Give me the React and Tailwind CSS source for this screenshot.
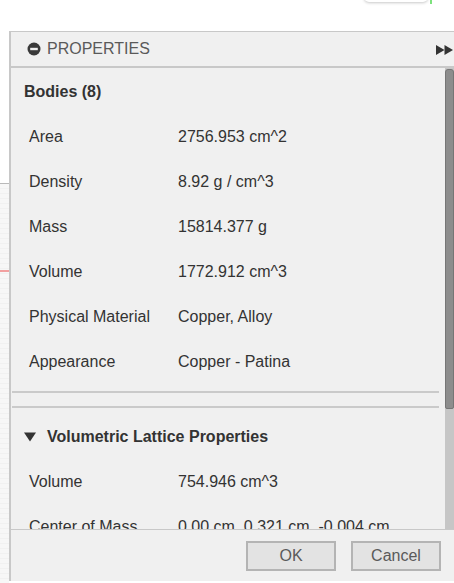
import React from "react";

const rows = [
  ["Area", "2756.953 cm^2"],
  ["Density", "8.92 g / cm^3"],
  ["Mass", "15814.377 g"],
  ["Volume", "1772.912 cm^3"],
  ["Physical Material", "Copper, Alloy"],
  ["Appearance", "Copper - Patina"],
];

function Row({ label, value }) {
  return (
    <div className="flex h-[45px] items-center shrink-0">
      <div className="w-[167px] shrink-0 pl-[18px] whitespace-nowrap">{label}</div>
      <div className="whitespace-nowrap">{value}</div>
    </div>
  );
}

export default function App() {
  return (
    <div
      className="relative w-[454px] h-[583px] bg-white overflow-hidden text-[16px] text-[#333]"
      style={{ fontFamily: '"Liberation Sans", Arial, sans-serif' }}
    >
      {/* top-right toolbar shadow remnant */}
      <div className="absolute left-[364px] top-[-6px] w-[64px] h-[8px] rounded-b-[5px] bg-white shadow-[0_1px_3px_rgba(0,0,0,0.22)]" />
      <div className="absolute left-[430px] top-0 w-[2px] h-[4px] bg-[#7de27d]" />
      {/* canvas strip at left */}
      <div className="absolute left-0 top-[183px] w-[9px] h-[400px] border-t border-[#b9b9b9] bg-[repeating-linear-gradient(180deg,#f7f7f7_0px,#f7f7f7_4px,#ebebeb_5px)]">
        <div className="mt-[86px] h-[2px] bg-[#f2a0a0]" />
      </div>

      <div className="ml-[9px] mt-[31px] w-[445px] h-[550px] flex flex-col bg-[#f0f0f0] border-l-2 border-[#c8c8c8]">
        {/* header */}
        <div className="h-[37px] shrink-0 flex items-center border-t border-b-2 border-[#c8c8c8] pl-[16px] pr-[1px]">
          <svg width="14" height="14" viewBox="0 0 14 14" className="shrink-0">
            <circle cx="7" cy="7" r="6.5" fill="#3a3a3a" />
            <rect x="3.2" y="5.8" width="7.6" height="2.4" fill="#f0f0f0" />
          </svg>
          <span className="ml-[6px] text-[#5a5a5a]">PROPERTIES</span>
          <svg width="17" height="10" viewBox="0 0 17 10" className="ml-auto mt-[2px]">
            <polygon points="0,0 8.5,5 0,10" fill="#333" />
            <polygon points="8.5,0 17,5 8.5,10" fill="#333" />
          </svg>
        </div>

        {/* body */}
        <div className="flex-1 flex min-h-0">
          <div className="flex-1 flex flex-col overflow-hidden pt-[1px]">
            <div className="flex h-[45px] items-center shrink-0 pl-[13px] font-bold">Bodies (8)</div>
            {rows.map(([l, v]) => (
              <Row key={l} label={l} value={v} />
            ))}
            <div className="shrink-0 mt-[7px] ml-[1px] mr-[6px] h-[2px] bg-[#cacaca]" />
            <div className="shrink-0 mt-[13px] ml-[1px] mr-[6px] h-[2px] bg-[#cacaca]" />
            <div className="flex h-[45px] items-center shrink-0 mt-[6px] pl-[13px] font-bold">
              <svg width="12" height="10" viewBox="0 0 12 10" className="mr-[11px]">
                <polygon points="0,0.5 12,0.5 6,9.5" fill="#333" />
              </svg>
              Volumetric Lattice Properties
            </div>
            <Row label="Volume" value="754.946 cm^3" />
            <Row label="Center of Mass" value="0.00 cm, 0.321 cm, -0.004 cm" />
          </div>
          <div className="w-[9px] shrink-0 bg-[#c6c6c6] flex flex-col">
            <div className="mt-[1px] h-[340px] bg-[#8d8d8d] border border-[#767676] rounded-t-[3px] rounded-b-[2px]" />
          </div>
        </div>

        {/* footer */}
        <div className="h-[52px] shrink-0 border-t border-[#c8c8c8] flex items-start pt-[11px] gap-[15px] pl-[235px]">
          <button className="w-[90px] h-[30px] bg-[#e3e3e3] border-2 border-[#b4b4b4] text-[#5a5a5a] text-[16px]">OK</button>
          <button className="w-[90px] h-[30px] bg-[#e3e3e3] border-2 border-[#b4b4b4] text-[#5a5a5a] text-[16px]">Cancel</button>
        </div>
      </div>
    </div>
  );
}
